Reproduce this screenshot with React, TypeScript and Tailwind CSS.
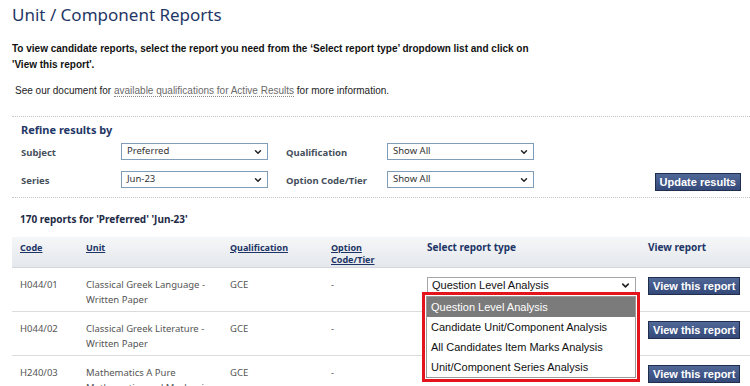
import { ChevronDown } from 'lucide-react';

const tahoma = "font-['Noto_Sans',Tahoma,sans-serif]";
const arial = "font-['Liberation_Sans',Arial,sans-serif]";

const rows = [
  { code: 'H044/01', unit: ['Classical Greek Language -', 'Written Paper'], qual: 'GCE', option: '-', select: true },
  { code: 'H044/02', unit: ['Classical Greek Literature -', 'Written Paper'], qual: 'GCE', option: '-', select: false },
  { code: 'H240/03', unit: ['Mathematics A Pure', 'Mathematics and Mechanics'], qual: 'GCE', option: '-', select: false }
];

const reportTypes = [
  'Question Level Analysis',
  'Candidate Unit/Component Analysis',
  'All Candidates Item Marks Analysis',
  'Unit/Component Series Analysis'
];

function FilterSelect({ value, width }: { value: string; width: string }) {
  return (
    <div
      className={`flex h-[17px] items-center justify-between border border-[#7f9db9] bg-white pl-[5px] pr-[4px] ${width} ${tahoma} text-[9.5px] text-[#333]`}
    >
      <span>{value}</span>
      <ChevronDown
        size={10}
        strokeWidth={3.5}
        className="text-[#222]"
      />
    </div>
  );
}

function NavyButton({ label }: { label: string }) {
  return (
    <button
      className={`h-[18px] border border-[#1f2e4d] bg-gradient-to-b from-[#506898] to-[#34497a] px-[4px] ${arial} text-[11px] font-bold leading-[16px] text-white`}
    >
      {label}
    </button>
  );
}

export default function App() {
  return (
    <div className="relative h-[386px] w-[750px] overflow-hidden bg-white pl-3">
      {/* Title */}
      <h1 className={`pt-[5px] ${tahoma} text-[17px] leading-[20px] text-[#1f3766]`}>Unit / Component Reports</h1>

      {/* Intro */}
      <p className={`mt-[16px] ${arial} text-[10px] font-bold leading-[16px] text-[#111]`}>
        To view candidate reports, select the report you need from the ‘Select report type’ dropdown list and click on
        <br />
        'View this report'.
      </p>
      <p className={`mt-[10px] pl-[3px] ${arial} text-[10px] leading-[16px] text-[#222]`}>
        See our document for{' '}
        <span className="border-b border-dotted border-[#8a8a8a] text-[#6a6a6a]">
          available qualifications for Active Results
        </span>{' '}
        for more information.
      </p>

      <div className="mt-[17px] border-t border-dotted border-[#c4c4c4]" />

      {/* Refine */}
      <div className={`pl-[9px] ${tahoma}`}>
        <h2 className="mt-[6px] text-[11px] font-bold leading-[14px] text-[#1f3766]">Refine results by</h2>

        <div className="mt-[6px] flex h-[17px] items-center">
          <span className="w-[100px] pt-[4px] text-[9.5px] font-bold text-[#46505c]">Subject</span>
          <FilterSelect
            value="Preferred"
            width="w-[147px]"
          />
          <span className="ml-[18px] w-[101px] pt-[4px] text-[9.5px] font-bold text-[#46505c]">Qualification</span>
          <FilterSelect
            value="Show All"
            width="w-[147px]"
          />
        </div>

        <div className="mt-[11px] flex h-[17px] items-center">
          <span className="w-[100px] pt-[4px] text-[9.5px] font-bold text-[#46505c]">Series</span>
          <FilterSelect
            value="Jun-23"
            width="w-[147px]"
          />
          <span className="ml-[18px] w-[101px] pt-[4px] text-[9.5px] font-bold text-[#46505c]">Option Code/Tier</span>
          <FilterSelect
            value="Show All"
            width="w-[147px]"
          />
          <div className="ml-auto mr-[9px]">
            <NavyButton label="Update results" />
          </div>
        </div>
      </div>

      <div className="mt-[9px] border-t border-dotted border-[#c4c4c4]" />

      <p className={`mt-[14px] pl-2 ${tahoma} text-[10px] font-bold leading-[14px] text-[#1d2b45]`}>
        170 reports for 'Preferred' 'Jun-23'
      </p>

      {/* Table */}
      <div className={`mt-[11px] ${tahoma}`}>
        <div className="flex h-[31px] border-b border-[#d4d8dc] bg-gradient-to-b from-[#f5f6f8] to-[#e4e8ec] pt-[5px] text-[9px] font-bold leading-[11.5px] text-[#1c3566]">
          <div className="w-[66px] pl-2">
            <span className="underline">Code</span>
          </div>
          <div className="w-[144px] pl-2">
            <span className="underline">Unit</span>
          </div>
          <div className="w-[101px] pl-2">
            <span className="underline">Qualification</span>
          </div>
          <div className="w-[96px] pl-2 underline">
            Option
            <br />
            Code/Tier
          </div>
          <div className="w-[221px] pl-2 text-[10px]">Select report type</div>
          <div className="flex-1 pl-2 text-[10px]">View report</div>
        </div>

        {rows.map((row) => (
          <div
            key={row.code}
            className="flex h-[44px] border-b border-[#dcdcdc] pt-[9px] text-[9.5px] leading-[15px] text-[#555]"
          >
            <div className="w-[66px] pl-2">{row.code}</div>
            <div className="w-[144px] pl-2">
              {row.unit[0]}
              <br />
              {row.unit[1]}
            </div>
            <div className="w-[101px] pl-2">{row.qual}</div>
            <div className="w-[96px] pl-2">{row.option}</div>
            <div className="w-[221px] pl-2">
              <div className="relative w-[209px]">
                <div
                  className={`flex h-[17px] items-center justify-between border border-[#a6a6a6] bg-white pl-[4px] pr-[4px] ${arial} text-[11px] text-[#111]`}
                >
                  <span>Question Level Analysis</span>
                  <ChevronDown
                    size={11}
                    strokeWidth={3.5}
                    className="text-[#222]"
                  />
                </div>
                {row.select && (
                  <div className="absolute left-[-5px] top-[15px] z-10 w-[218px] border-[3px] border-[#e3141b] bg-white p-px">
                    <div className={`border border-[#9a9a9a] ${arial} text-[11px] leading-[20px]`}>
                      {reportTypes.map((type, i) => (
                        <div
                          key={type}
                          className={i === 0 ? 'bg-[#7b7b7b] pl-[4px] text-white' : 'pl-[4px] text-[#111]'}
                        >
                          {type}
                        </div>
                      ))}
                    </div>
                  </div>
                )}
              </div>
            </div>
            <div className="flex-1 pl-2">
              <NavyButton label="View this report" />
            </div>
          </div>
        ))}
      </div>
    </div>
  );
}
